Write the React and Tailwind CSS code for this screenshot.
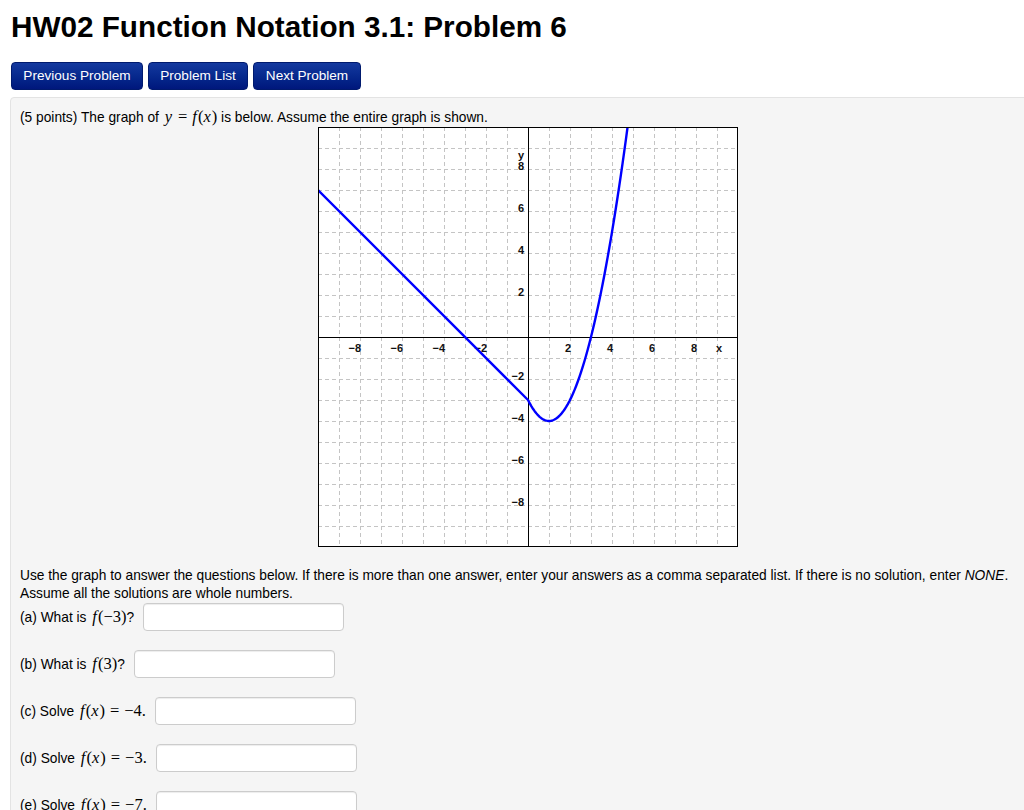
import React from 'react';

const SIZE = 420;
const UNIT = 21;
const toX = (x) => SIZE / 2 + x * UNIT;
const toY = (y) => SIZE / 2 - y * UNIT;

const buildCurve = () => {
    const pts = [[-10, 7], [0, -3]];
    const end = 1 + Math.sqrt(14);
    for (let i = 1; i <= 60; i++) {
        const x = (end * i) / 60;
        pts.push([x, (x - 1) * (x - 1) - 4]);
    }
    return pts.map(([x, y], i) => `${i ? 'L' : 'M'}${toX(x).toFixed(2)} ${toY(y).toFixed(2)}`).join(' ');
};

const Graph = () => {
    const ticks = [];
    for (let i = -9; i <= 9; i++) if (i !== 0) ticks.push(i);
    const labels = [-8, -6, -4, -2, 2, 4, 6, 8];

    return (
        <svg width={SIZE} height={SIZE} viewBox={`0 0 ${SIZE} ${SIZE}`} className="block bg-white">
            {ticks.map((t) => (
                <g key={t} stroke="#c4c4c4" strokeWidth="1" strokeDasharray="4 3">
                    <line x1={toX(t) + 0.5} y1="0" x2={toX(t) + 0.5} y2={SIZE} />
                    <line x1="0" y1={toY(t) + 0.5} x2={SIZE} y2={toY(t) + 0.5} />
                </g>
            ))}
            <line x1={SIZE / 2 + 0.5} y1="0" x2={SIZE / 2 + 0.5} y2={SIZE} stroke="#000" strokeWidth="1" />
            <line x1="0" y1={SIZE / 2 + 0.5} x2={SIZE} y2={SIZE / 2 + 0.5} stroke="#000" strokeWidth="1" />
            <g fontFamily="'Liberation Sans', Arial, sans-serif" fontSize="11" fontWeight="bold" fill="#111">
                {labels.map((l) => (
                    <text key={`x${l}`} x={toX(l) + 1} y={SIZE / 2 + 15} textAnchor="end">
                        {l < 0 ? `−${-l}` : l}
                    </text>
                ))}
                {labels.map((l) => (
                    <text key={`y${l}`} x={SIZE / 2 - 4} y={toY(l) + 0.5} textAnchor="end">
                        {l < 0 ? `−${-l}` : l}
                    </text>
                ))}
                <text x={SIZE / 2 - 4} y={toY(8) - 10} textAnchor="end">y</text>
                <text x={toX(9) + 2} y={SIZE / 2 + 15} textAnchor="middle">x</text>
            </g>
            <path d={buildCurve()} fill="none" stroke="#0000ff" strokeWidth="2.4" strokeLinejoin="round" />
            <rect x="0.5" y="0.5" width={SIZE - 1} height={SIZE - 1} fill="none" stroke="#000" strokeWidth="1" />
        </svg>
    );
};

const M = ({ children }) => (
    <span className="ml-[2px] font-['Liberation_Serif',serif] text-[16.5px]">{children}</span>
);

const V = ({ children }) => <i className="pr-[1px]">{children}</i>;

const Eq = () => <span className="mx-[5px]">=</span>;

const Question = ({ label, children, first }) => (
    <div className={`flex items-center h-[28px] ${first ? '' : 'mt-[19px]'}`}>
        <span>{label} {children}</span>
        <input
            type="text"
            className="ml-[9px] w-[201px] h-[28px] bg-white border border-[#cccccc] rounded-[4px] shadow-[inset_0_1px_1px_rgba(0,0,0,0.075)]"
        />
    </div>
);

const navButtons = [
    { label: 'Previous Problem', w: 'w-[132px]' },
    { label: 'Problem List', w: 'w-[100px]' },
    { label: 'Next Problem', w: 'w-[108px]' },
];

export default function App() {
    return (
        <div className="w-[1024px] h-[810px] overflow-hidden bg-white text-black font-['Liberation_Sans',Arial,sans-serif] text-[13.75px]">
            <h1 className="pl-[11px] pt-[9px] text-[29.7px] font-bold leading-[36px]">
                HW02 Function Notation 3.1: Problem 6
            </h1>

            <div className="flex gap-[5px] ml-[11px] mt-[17px]">
                {navButtons.map((b) => (
                    <button
                        key={b.label}
                        className={`${b.w} h-[28px] rounded-[4px] border border-[#001a6e] bg-gradient-to-b from-[#14399f] to-[#00177c] text-white text-[13.6px]`}
                    >
                        {b.label}
                    </button>
                ))}
            </div>

            <div className="ml-[10px] mt-[7px] w-[1036px] h-[800px] border border-[#e3e3e3] rounded-[4px] bg-[#f5f5f5] pt-[10px] px-[9px] leading-[18px]">
                <p>
                    (5 points) The graph of{' '}
                    <M>
                        <V>y</V>
                        <Eq />
                        <V>f</V>(<V>x</V>)
                    </M>{' '}
                    is below. Assume the entire graph is shown.
                </p>

                <div className="flex justify-center">
                    <Graph />
                </div>

                <p className="mt-[20px]">
                    Use the graph to answer the questions below. If there is more than one answer, enter your answers as a comma separated list. If there is no solution, enter <i>NONE</i>.
                    <br />
                    Assume all the solutions are whole numbers.
                </p>

                <Question label="(a) What is" first>
                    <M><V>f</V>(−3)</M>?
                </Question>
                <Question label="(b) What is">
                    <M><V>f</V>(3)</M>?
                </Question>
                <Question label="(c) Solve">
                    <M><V>f</V>(<V>x</V>)<Eq />−4.</M>
                </Question>
                <Question label="(d) Solve">
                    <M><V>f</V>(<V>x</V>)<Eq />−3.</M>
                </Question>
                <Question label="(e) Solve">
                    <M><V>f</V>(<V>x</V>)<Eq />−7.</M>
                </Question>
            </div>
        </div>
    );
}
